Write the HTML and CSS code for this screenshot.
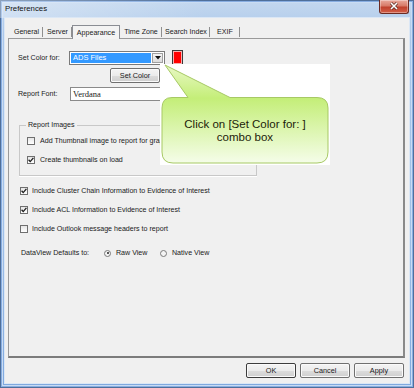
FILE: index.html
```html
<!DOCTYPE html>
<html>
<head>
<meta charset="utf-8">
<link rel="stylesheet" href="styles.css">
</head>
<body>
<div class="window">
  <div class="titlebar">
    <span class="title">Preferences</span>
    <div class="close">
      <svg width="30" height="14" viewBox="0 0 30 14">
        <path d="M12 4 L18 10 M18 4 L12 10" stroke="#5a2a22" stroke-width="3" fill="none"/>
        <path d="M12 4 L18 10 M18 4 L12 10" stroke="#ffffff" stroke-width="1.6" fill="none"/>
      </svg>
    </div>
  </div>
  <div class="client">
    <div class="tabs">
      <div class="tab t1">General</div>
      <div class="tab t2">Server</div>
      <div class="tab t3 selected">Appearance</div>
      <div class="tab t4">Time Zone</div>
      <div class="tab t5">Search Index</div>
      <div class="tab t6">EXIF</div>
    </div>
    <div class="panel">
      <div class="row r-color">
        <span class="label l1">Set Color for:</span>
        <div class="combo">
          <span class="combo-text">ADS Files</span>
          <span class="combo-btn"><svg width="6" height="4" viewBox="0 0 6 4"><path d="M0 0 L6 0 L3 3.5 Z" fill="#111"/></svg></span>
        </div>
        <span class="swatch"></span>
      </div>
      <div class="row r-btn">
        <button class="btn setcolor">Set Color</button>
      </div>
      <div class="row r-font">
        <span class="label l2">Report Font:</span>
        <div class="textbox">Verdana</div>
      </div>
      <fieldset class="group">
        <legend>Report Images</legend>
        <div class="check-row g1"><span class="cb"></span><span>Add Thumbnail image to report for graphic files</span></div>
        <div class="check-row g2"><span class="cb checked"><svg width="8" height="8" viewBox="0 0 8 8"><path d="M1.6 3.8 L3.2 5.6 L6.4 1.8" stroke="#1a1a1a" stroke-width="1.3" fill="none"/></svg></span><span>Create thumbnails on load</span></div>
      </fieldset>
      <div class="check-row c1"><span class="cb checked"><svg width="8" height="8" viewBox="0 0 8 8"><path d="M1.6 3.8 L3.2 5.6 L6.4 1.8" stroke="#1a1a1a" stroke-width="1.3" fill="none"/></svg></span><span>Include Cluster Chain Information to Evidence of Interest</span></div>
      <div class="check-row c2"><span class="cb checked"><svg width="8" height="8" viewBox="0 0 8 8"><path d="M1.6 3.8 L3.2 5.6 L6.4 1.8" stroke="#1a1a1a" stroke-width="1.3" fill="none"/></svg></span><span>Include ACL Information to Evidence of Interest</span></div>
      <div class="check-row c3"><span class="cb"></span><span>Include Outlook message headers to report</span></div>
      <div class="row r-radio">
        <span class="label l3">DataView Defaults to:</span>
        <span class="radio on"></span><span class="rtext">Raw View</span>
        <span class="radio"></span><span class="rtext">Native View</span>
      </div>
    </div>
    <div class="buttons">
      <button class="btn dlg default">OK</button>
      <button class="btn dlg">Cancel</button>
      <button class="btn dlg">Apply</button>
    </div>
  </div>
  <div class="callout">
    <svg class="bubble" width="170" height="101" viewBox="0 0 170 101">
      <defs>
        <linearGradient id="g" x1="0" y1="0" x2="0" y2="1">
          <stop offset="0" stop-color="#e9f8c6"/>
          <stop offset="0.34" stop-color="#c4ee78"/>
          <stop offset="1" stop-color="#f5fde9"/>
        </linearGradient>
      </defs>
      <path d="M12 33.5 L28 33.5 L5 1 L70 33.5 L157 33.5 Q168 33.5 168 44 L168 88 Q168 99 157 99 L13 99 Q2 99 2 88 L2 44 Q2 33.5 12 33.5 Z" fill="url(#g)" stroke="#a7c965" stroke-width="1"/>
    </svg>
    <div class="callout-text">Click on [Set Color for: ]<br>combo box</div>
  </div>
</div>
</body>
</html>
```

FILE: styles.css
```css
* { box-sizing: border-box; }

body {
  margin: 0;
  width: 414px;
  height: 388px;
  overflow: hidden;
  font-family: "Liberation Sans", Arial, sans-serif;
  font-size: 7.1px;
  color: #1a1a1a;
}

.window {
  position: relative;
  width: 414px;
  height: 388px;
  display: flex;
  flex-direction: column;
  background: linear-gradient(to bottom, #c4d8ef 0%, #a9c6ea 10%, #9fbfe7 60%, #7fa8de 100%);
  box-shadow: inset 0 0 0 1px #4f6f9a, inset 0 0 0 2px #88aee2, inset 0 0 0 3px #c9dcf3;
}

.titlebar {
  height: 18px;
  display: flex;
  align-items: flex-start;
  padding-left: 5px;
  background: linear-gradient(to right, rgba(255,255,255,0.35), rgba(255,255,255,0) 50%);
}

.title {
  margin-top: 4px;
  font-size: 7.8px;
  color: #111;
}

.close {
  margin-left: auto;
  margin-right: 5px;
  width: 30px;
  height: 14px;
  border: 1px solid #6b2a22;
  border-top: none;
  border-radius: 0 0 3px 3px;
  background: linear-gradient(to bottom, #e9a99c 0%, #d77a68 45%, #c0412d 55%, #d2604a 100%);
  box-shadow: inset 0 0 0 1px rgba(255,255,255,0.35);
}

.close svg { display: block; margin: -1px 0 0 -1px; }

.client {
  flex: 1;
  margin: 0 5px 5px 5px;
  background: #f0f0f0;
  box-shadow: 0 0 0 1px #dbe7f5;
  display: flex;
  flex-direction: column;
}

.tabs {
  margin-top: 7px;
  height: 13px;
  padding-left: 5px;
  display: flex;
  position: relative;
  z-index: 2;
}

.tab {
  height: 13px;
  display: flex;
  align-items: center;
  justify-content: center;
  padding-top: 1px;
  position: relative;
}

.tab::after {
  content: "";
  position: absolute;
  right: 0;
  top: 2px;
  width: 1px;
  height: 10px;
  background: #8f8f8f;
}

.tab.selected::after { display: none; }
.t1 { width: 33px; }
.t2 { width: 29px; }
.t3 { width: 48px; }
.t4 { width: 42px; }
.t5 { width: 48px; }
.t6 { width: 30px; }

.tab.selected {
  border: 1px solid #8a8d94;
  border-bottom: none;
  background: #f3f3f3;
  height: 14px;
  margin-bottom: -1px;
}

.panel {
  margin-left: 3px;
  width: 397px;
  height: 320px;
  border: 1px solid #9a9a9a;
  border-bottom: 2px solid #7c7c7c;
  border-right: 2px solid #8a8a8a;
  background: #f0f0f0;
  padding-left: 9px;
  display: flex;
  flex-direction: column;
}

.row { display: flex; align-items: center; }

.r-color { margin-top: 11px; height: 15px; }
.l1 { width: 51px; }

.combo {
  width: 96px;
  height: 14px;
  border: 1px solid #7a7a7a;
  background: #fff;
  display: flex;
  padding: 1px;
}

.combo-text {
  flex: 1;
  background: #3399ff;
  color: #fff;
  padding-left: 2px;
  line-height: 10px;
  font-size: 7.5px;
}

.combo-btn {
  width: 11px;
  margin-left: 1px;
  border: 1px solid #a0a0a0;
  background: linear-gradient(#f4f4f4, #dcdcdc);
  display: flex;
  align-items: center;
  justify-content: center;
}

.combo-btn svg { display: block; }

.swatch {
  margin-left: 7px;
  width: 11px;
  height: 15px;
  border: 1px solid #3a3a3a;
  background: #ff0000;
  box-shadow: inset 0 0 0 1px #f6b0b0;
}

.r-btn { margin-top: 3px; height: 15px; }

.btn {
  font-family: "Liberation Sans", Arial, sans-serif;
  font-size: 7.3px;
  color: #1a1a1a;
  border: 1px solid #707070;
  border-radius: 2px;
  background: linear-gradient(#f4f4f4 0%, #ebebeb 50%, #dcdcdc 52%, #cfcfcf 100%);
  padding: 0;
  box-shadow: inset 0 0 0 1px #fafafa;
}

.setcolor {
  margin-left: 92px;
  width: 50px;
  height: 15px;
}

.r-font { margin-top: 4px; height: 14px; }
.l2 { width: 52px; }

.textbox {
  width: 180px;
  height: 14px;
  border: 1px solid #8a8a8a;
  background: #fff;
  font-family: "Liberation Serif", "Times New Roman", serif;
  font-size: 8.5px;
  padding-left: 2px;
  line-height: 12px;
}

.group {
  margin: 20px 0 0 1px;
  width: 238px;
  height: 55px;
  border: 1px solid #c8c8c8;
  box-shadow: 0 1px 0 #fff;
  padding: 3px 0 0 7px;
}

.group legend {
  padding: 0 2px;
  margin-left: -1px;
  font-size: 7.1px;
}

.check-row {
  display: flex;
  align-items: center;
  height: 10px;
}

.cb {
  width: 8px;
  height: 8px;
  border: 1px solid #6f6f6f;
  background: linear-gradient(#e6e6e6, #ffffff);
  margin-right: 5px;
  flex: none;
  position: relative;
}

.cb svg { position: absolute; left: -1px; top: -1px; }

.g1 { margin-top: 4px; }
.g2 { margin-top: 9px; }

.c1 { margin-top: 10px; margin-left: 2px; }
.c2 { margin-top: 9px; margin-left: 2px; }
.c3 { margin-top: 9px; margin-left: 2px; }
.c1 .cb, .c2 .cb, .c3 .cb { margin-right: 4px; }

.r-radio { margin-top: 14px; height: 10px; margin-left: 3px; }
.l3 { width: 83px; }

.radio {
  width: 7px;
  height: 7px;
  border-radius: 50%;
  border: 1px solid #7a7a7a;
  background: #f4f4f4;
  margin-right: 5px;
  position: relative;
  flex: none;
}

.radio.on::after {
  content: "";
  position: absolute;
  left: 1.5px;
  top: 1.5px;
  width: 2px;
  height: 2px;
  border-radius: 50%;
  background: #222;
}

.rtext { width: 44px; }

.buttons {
  margin-top: 5px;
  height: 15px;
  display: flex;
  justify-content: flex-end;
  gap: 4px;
  padding-right: 5px;
}

.dlg { width: 50px; height: 15px; }
.default { border-color: #3c3c3c; }

.callout {
  position: absolute;
  left: 160px;
  top: 64px;
  width: 170px;
  height: 101px;
  background: #fff;
}

.bubble { position: absolute; left: 0; top: 0; }

.callout-text {
  position: absolute;
  left: 2px;
  top: 54px;
  width: 166px;
  text-align: center;
  font-family: "Liberation Sans", Arial, sans-serif;
  font-size: 11.5px;
  line-height: 13px;
  color: #1c1c0a;
}
```
